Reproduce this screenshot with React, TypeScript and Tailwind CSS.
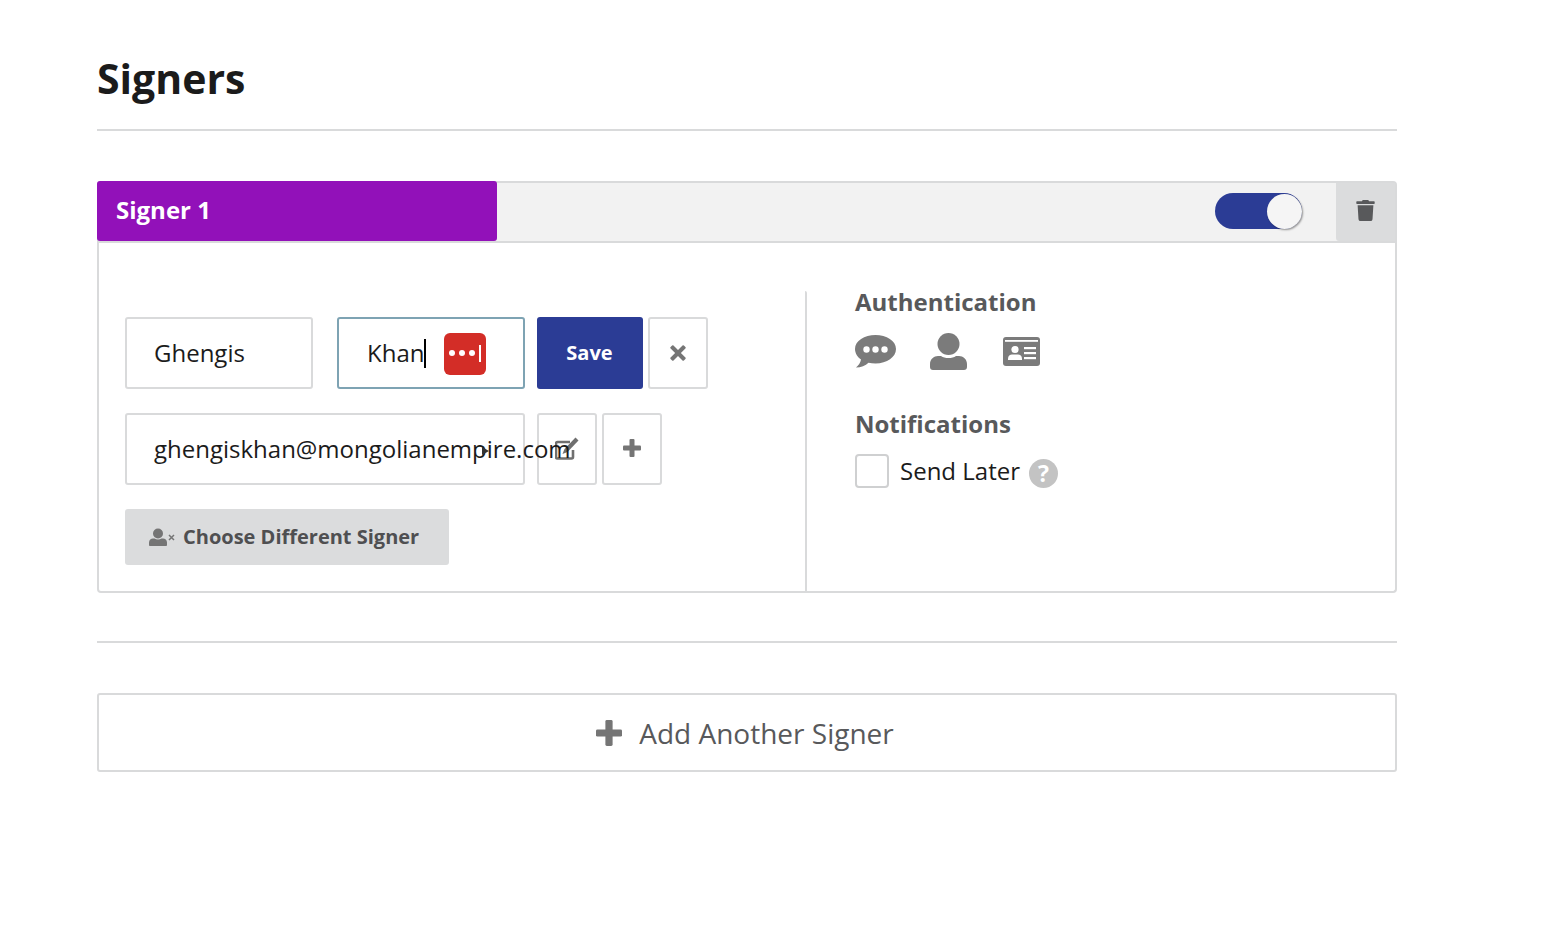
import React from 'react';
import { FaTrash } from 'react-icons/fa';

const box = 'border-2 border-[#d9dadb] rounded-[3px] bg-white';

const IconButton: React.FC<{ className?: string; children: React.ReactNode }> = ({ className = '', children }) => (
  <button className={`${box} w-[60px] h-[72px] flex items-center justify-center text-[#757575] ${className}`}>
    {children}
  </button>
);

const PlusIcon: React.FC<{ size: number; className?: string }> = ({ size, className }) => (
  <svg width={size} height={size} viewBox="0 0 18 18" fill="currentColor" className={className}>
    <rect x="6.500" y="0" width="5" height="18" rx="1" />
    <rect x="0" y="6.500" width="18" height="5" rx="1" />
  </svg>
);

const CrossIcon = () => (
  <svg width="16" height="16" viewBox="0 0 16 16" fill="currentColor">
    <path d="M3.500.6 8 5.100 12.500.6a1 1 0 0 1 1.400 0l1.500 1.500a1 1 0 0 1 0 1.400L10.900 8l4.500 4.500a1 1 0 0 1 0 1.400l-1.500 1.500a1 1 0 0 1-1.400 0L8 10.900l-4.500 4.500a1 1 0 0 1-1.400 0L.6 13.900a1 1 0 0 1 0-1.400L5.100 8 .6 3.500a1 1 0 0 1 0-1.400L2.100.6a1 1 0 0 1 1.400 0Z" />
  </svg>
);

const EditIcon = () => (
  <svg width="24" height="23" viewBox="0 0 24 23" fill="none">
    <path d="M18 13v7a1.500 1.500 0 0 1-1.500 1.500h-14A1.500 1.500 0 0 1 1 20V6.500A1.500 1.500 0 0 1 2.500 5H15" stroke="#6f6f6f" strokeWidth="2.600" />
    <path d="M20.500 .5l3 3L12.500 15 7.500 17l2-5Z" fill="#6f6f6f" />
  </svg>
);

const ChatIcon = () => (
  <svg width="41" height="33" viewBox="0 0 41 33" fill="#7b7b7b">
    <path d="M20.500 0C31.500 0 41 5.800 41 14c0 8-9 14.500-20.500 14.500-2.500 0-4.800-.3-7-.8C10.500 30.500 6 32.500 1 32.500c2.500-2 4.500-5 5-8C2.500 22 0 18.300 0 14 0 5.800 9.500 0 20.500 0Z" />
    <circle cx="11.500" cy="14.500" r="3.200" fill="#fff" />
    <circle cx="20.500" cy="14.500" r="3.200" fill="#fff" />
    <circle cx="29.500" cy="14.500" r="3.200" fill="#fff" />
  </svg>
);

const UserIcon = () => (
  <svg width="37" height="37" viewBox="0 0 37 37" fill="#7b7b7b">
    <circle cx="18.500" cy="11" r="11" />
    <path d="M0 34v-3c0-5 4-8 8-8h3c2 1.500 4.500 2 7.500 2s5.500-.5 7.500-2h3c4 0 8 3 8 8v3c0 1.800-1.200 3-3 3H3c-1.800 0-3-1.200-3-3Z" />
  </svg>
);

const CardIcon = () => (
  <svg width="37" height="29" viewBox="0 0 37 29">
    <rect width="37" height="29" rx="3" fill="#7b7b7b" />
    <rect x="2" y="3" width="33" height="1.800" fill="#fff" />
    <circle cx="12" cy="12.500" r="3.600" fill="#fff" />
    <path d="M5 23v-1.500c0-2.500 2-4 4-4h6c2 0 4 1.500 4 4V23Z" fill="#fff" />
    <rect x="21" y="10" width="12" height="2.200" fill="#fff" />
    <rect x="21" y="15" width="12" height="2.200" fill="#fff" />
    <rect x="21" y="20" width="12" height="2.200" fill="#fff" />
  </svg>
);

const UserRemoveIcon = () => (
  <svg width="26" height="18" viewBox="0 0 26 18" fill="#757575">
    <circle cx="9" cy="5.500" r="5" />
    <path d="M0 17v-2.500C0 12 2 10.500 4 10.500h1.500c1 .6 2.200 1 3.500 1s2.500-.4 3.500-1H14c2 0 4 1.500 4 4V17c0 .5-.4 1-1 1H1c-.6 0-1-.5-1-1Z" />
    <path d="M20 7l5 5m0-5l-5 5" stroke="#757575" strokeWidth="1.500" fill="none" />
  </svg>
);

const LastPassBadge = () => (
  <div className="absolute left-[105px] top-[14px] w-[42px] h-[42px] rounded-[6px] bg-[#d32d27] flex items-center pl-[5px] pb-[2px]">
    <span className="w-[5.500px] h-[5.500px] rounded-full bg-white" />
    <span className="w-[5.500px] h-[5.500px] rounded-full bg-white ml-[4.500px]" />
    <span className="w-[5.500px] h-[5.500px] rounded-full bg-white ml-[4.500px]" />
    <span className="w-[2px] h-[17px] bg-white ml-[4.500px]" />
  </div>
);

export default function App() {
  return (
    <div className="min-h-[936px] bg-white pl-[97px] w-[1397px] font-['Open_Sans',sans-serif]">
      <div className="pt-[52px] h-[129px]">
        <h1 className="text-[41px] leading-[52px] font-bold text-[#1b1b1b]">Signers</h1>
      </div>
      <div className="h-[2px] bg-[#d9dadb]" />

      <section className="mt-[50px]">
        <header className="h-[62px] flex items-start bg-[#f2f2f2] border-2 border-[#d9dadb] rounded-t-[4px] relative">
          <div className="-ml-[2px] -mt-[2px] w-[400px] h-[60px] bg-[#9211b9] rounded-[3px] flex items-center pl-[19px] pb-[2px] text-[24px] font-bold text-white">
            Signer 1
          </div>
          <div className="ml-auto flex items-start">
            <div className="mt-[10px] mr-[34px] w-[87px] h-[36px] rounded-full bg-[#2b3c95] flex justify-end items-center">
              <span className="w-[35px] h-[35px] rounded-full bg-[#f5f5f5] shadow-[1px_1px_2px_rgba(0,0,0,0.4)]" />
            </div>
            <div className="w-[59px] h-[58px] bg-[#dbdcdd] rounded-bl-[3px] pb-[4px] flex items-center justify-center text-[#58595b]">
              <FaTrash size={21} />
            </div>
          </div>
        </header>

        <div className="h-[350px] flex border-2 border-t-0 border-[#d9dadb] rounded-b-[4px]">
          <div className="w-[708px] h-[300px] mt-[48px] border-r-2 border-[#d9dadb] rounded-tr-[2px] pl-[26px] pt-[26px] flex flex-col">
            <div className="flex">
              <div className={`${box} w-[188px] h-[72px] flex items-center pl-[27px] text-[24px] text-[#1b1b1b]`}>Ghengis</div>
              <div className="relative ml-[24px] w-[188px] h-[72px] border-2 border-[#7ea3b3] rounded-[3px] flex items-center pl-[28px] text-[24px] text-[#1b1b1b]">
                Khan
                <span className="w-[2px] h-[29px] bg-black" />
                <LastPassBadge />
              </div>
              <button className="ml-[12px] w-[106px] h-[72px] rounded-[3px] bg-[#2b3c95] text-white text-[20px] font-bold pr-[1px]">Save</button>
              <IconButton className="ml-[5px]"><CrossIcon /></IconButton>
            </div>

            <div className="flex mt-[24px]">
              <div className={`${box} relative w-[400px] h-[72px] flex items-center pl-[27px] text-[24px] text-[#1b1b1b] whitespace-nowrap`}>
                <span className="w-[400px]">ghengiskhan@mongolianempire.com</span>
                <span className="absolute left-[355px] top-[32px] w-0 h-0 border-y-[4px] border-y-transparent border-l-[7px] border-l-[#333]" />
              </div>
              <IconButton className="ml-[12px] pb-[2px]"><EditIcon /></IconButton>
              <IconButton className="ml-[5px] pb-[2px]"><PlusIcon size={18} /></IconButton>
            </div>

            <button className="mt-[24px] w-[324px] h-[56px] rounded-[3px] bg-[#dbdcdd] flex items-center pl-[24px] gap-[8px] text-[20px] font-bold text-[#4f4f51]">
              <UserRemoveIcon />
              Choose Different Signer
            </button>
          </div>

          <div className="pl-[48px] pt-[42px]">
            <h2 className="text-[24px] leading-[33px] font-bold text-[#58595b]">Authentication</h2>
            <div className="flex items-center mt-[15px] h-[37px]">
              <ChatIcon />
              <span className="ml-[34px]"><UserIcon /></span>
              <span className="ml-[36px]"><CardIcon /></span>
            </div>
            <h2 className="mt-[37px] text-[24px] leading-[33px] font-bold text-[#58595b]">Notifications</h2>
            <div className="flex items-center mt-[14px]">
              <div className="w-[34px] h-[34px] border-2 border-[#cfd0d1] rounded-[4px]" />
              <span className="ml-[11px] text-[24px] leading-[34px] text-[#1b1b1b]">Send Later</span>
              <span className="ml-[9px] mt-[5px] w-[29px] h-[29px] rounded-full bg-[#c3c3c3] flex items-center justify-center text-white text-[23px] font-bold">?</span>
            </div>
          </div>
        </div>
      </section>

      <div className="mt-[48px] h-[2px] bg-[#d9dadb]" />

      <button className="mt-[50px] w-full h-[79px] border-2 border-[#d9dadb] rounded-[3px] flex items-center justify-center pr-[4px] text-[#58595b] text-[28px]">
        <PlusIcon size={26} className="text-[#757575] mr-[17px]" />
        Add Another Signer
      </button>
    </div>
  );
}
